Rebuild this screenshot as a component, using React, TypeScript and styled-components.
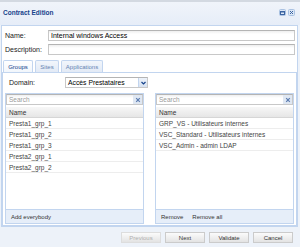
import React, { FC } from 'react'
import styled, { createGlobalStyle } from 'styled-components'

const GlobalStyle = createGlobalStyle`
  html, body { margin: 0; padding: 0; }
  body {
    width: 300px;
    height: 247px;
    overflow: hidden;
    background: #edf2f9;
    font-family: 'Liberation Sans', Arial, sans-serif;
  }
  * { box-sizing: border-box; }
`

const Window = styled.div`
  width: 300px;
  height: 247px;
  display: flex;
  flex-direction: column;
  background: #edf2f9;
  border-top: 2px solid #d3d9e1;
`

const TitleBar = styled.div`
  height: 23px;
  display: flex;
  align-items: center;
  justify-content: space-between;
  padding: 0 5px 2px 3px;
  background: linear-gradient(#f0f4fa, #e6edf8);
`

const Title = styled.div`
  font: bold 6.5px 'Liberation Sans', Arial, sans-serif;
  color: #15428b;
`

const Tools = styled.div`
  display: flex;
  gap: 2px;
`

const Tool = styled.div`
  width: 7px;
  height: 7px;
  display: flex;
  align-items: center;
  justify-content: center;
  background: #dce7f5;
  border: 1px solid #aac2e2;
  border-radius: 1.5px;
`

const Body = styled.div`
  margin-left: 1px;
  width: 297px;
  height: 202px;
  display: flex;
  flex-direction: column;
  border: 1px solid #c2d5ef;
  background: linear-gradient(#ffffff 40%, #e4edf9 46px);
`

const Form = styled.div`
  padding: 4px 2px 0 3px;
  display: flex;
  flex-direction: column;
  gap: 3px;
`

const Row = styled.div`
  display: flex;
  align-items: center;
`

const Label = styled.div<{ $w: number }>`
  width: ${(p) => p.$w}px;
  font-size: 7px;
  color: #1a1a1a;
`

const TextInput = styled.div`
  flex: 1;
  height: 11px;
  padding-left: 2px;
  display: flex;
  align-items: center;
  font-size: 7px;
  color: #000;
  background: linear-gradient(#eeeeee, #ffffff 3px);
  border: 1px solid #c8c8c8;
  border-top-color: #b4b4b4;
`

const TabStrip = styled.div`
  margin-top: 5px;
  height: 12px;
  padding-left: 1px;
  display: flex;
  align-items: flex-end;
  gap: 2px;
`

const Tab = styled.div<{ $w: number; $active?: boolean }>`
  width: ${(p) => p.$w}px;
  height: 12px;
  display: flex;
  align-items: center;
  justify-content: center;
  font-size: 6px;
  color: ${(p) => (p.$active ? '#15428b' : '#6684b3')};
  background: ${(p) =>
    p.$active ? 'linear-gradient(#ffffff, #f1f6fc)' : 'linear-gradient(#f2f6fb, #e2eaf6)'};
  border: 1px solid #c2d5ef;
  border-bottom: none;
  border-radius: 2px 2px 0 0;
`

const TabPanel = styled.div`
  flex: 1;
  display: flex;
  flex-direction: column;
  padding: 4px 2px 1px 2px;
  background: #ffffff;
  border: 1px solid #c2d5ef;
`

const DomainRow = styled.div`
  height: 11px;
  padding-left: 4px;
  display: flex;
  align-items: center;
`

const Select = styled.div`
  width: 83px;
  height: 11px;
  display: flex;
  align-items: stretch;
  background: #fff;
  border: 1px solid #c8c8c8;
  border-top-color: #b4b4b4;
`

const SelectText = styled.div`
  flex: 1;
  padding-left: 2px;
  display: flex;
  align-items: center;
  font-size: 6.8px;
  color: #000;
`

const SelectArrow = styled.div`
  width: 9px;
  display: flex;
  align-items: center;
  justify-content: center;
  background: linear-gradient(#eef3fa, #d7e2f1);
  border-left: 1px solid #c2d5ef;
`

const Lists = styled.div`
  margin-top: 5px;
  display: flex;
  gap: 11px;
`

const ListPanel = styled.div`
  width: 139px;
  height: 131px;
  display: flex;
  flex-direction: column;
  border: 1px solid #c2d5ef;
  background: #fff;
`

const SearchBox = styled.div`
  margin-bottom: 2px;
  height: 11px;
  display: flex;
  align-items: center;
  padding-left: 2px;
  font-size: 6.5px;
  color: #9a9a9a;
  border: 1px solid #c8c8c8;
  border-top-color: #b4b4b4;
  background: linear-gradient(#efefef, #ffffff 3px);
`

const SearchText = styled.div`
  flex: 1;
`

const ClearButton = styled.div`
  width: 9px;
  height: 9px;
  display: flex;
  align-items: center;
  justify-content: center;
  background: #dfe7f2;
`

const Header = styled.div`
  height: 11px;
  padding-left: 3px;
  display: flex;
  align-items: center;
  font-size: 6.5px;
  color: #333;
  background: linear-gradient(#f7f7f7, #e6e6e6);
  border-bottom: 1px solid #d6d6d6;
`

const Item = styled.div`
  height: 11px;
  padding-left: 3px;
  display: flex;
  align-items: center;
  font-size: 6.5px;
  color: #444;
  border-bottom: 1px solid #ededed;
`

const Spacer = styled.div`
  flex: 1;
`

const ListFooter = styled.div`
  height: 14px;
  padding-left: 5px;
  display: flex;
  align-items: center;
  gap: 9px;
  font-size: 6px;
  color: #333;
  background: #e6eef9;
  border-top: 1px solid #c2d5ef;
`

const ButtonBar = styled.div`
  flex: 1;
  padding: 5px 7px 0 0;
  display: flex;
  justify-content: flex-end;
  align-items: flex-start;
  gap: 4px;
`

const Button = styled.div<{ $disabled?: boolean }>`
  width: 40px;
  height: 11px;
  display: flex;
  align-items: center;
  justify-content: center;
  font-size: 6px;
  color: ${(p) => (p.$disabled ? '#b0b0b0' : '#333')};
  background: linear-gradient(#fbfbfb, #e3e3e3);
  border: 1px solid ${(p) => (p.$disabled ? '#dddddd' : '#cbcbcb')};
`

const left = ['Presta1_grp_1', 'Presta1_grp_2', 'Presta1_grp_3', 'Presta2_grp_1', 'Presta2_grp_2']
const right = ['GRP_VS - Utilisateurs internes', 'VSC_Standard - Utilisateurs internes', 'VSC_Admin - admin LDAP']

const Cross: FC<{ size: number; color: string }> = ({ size, color }) => (
  <svg width={size} height={size} viewBox='0 0 10 10'>
    <path d='M2 2 L8 8 M8 2 L2 8' stroke={color} strokeWidth='2' />
  </svg>
)

const List: FC<{ items: string[]; footer: string[] }> = ({ items, footer }) => (
  <ListPanel>
    <SearchBox>
      <SearchText>Search</SearchText>
      <ClearButton><Cross size={6} color='#5a7bb0' /></ClearButton>
    </SearchBox>
    <Header>Name</Header>
    {items.map((i) => <Item key={i}>{i}</Item>)}
    <Spacer />
    <ListFooter>{footer.map((f) => <span key={f}>{f}</span>)}</ListFooter>
  </ListPanel>
)

const App: FC = () => (
  <>
    <GlobalStyle />
    <Window>
      <TitleBar>
        <Title>Contract Edition</Title>
        <Tools>
          <Tool>
            <svg width='5' height='4' viewBox='0 0 5 4'>
              <rect x='0.5' y='0.5' width='4' height='3' fill='none' stroke='#3b64a2' />
              <rect x='0' y='0' width='5' height='1.5' fill='#3b64a2' />
            </svg>
          </Tool>
          <Tool><Cross size={5} color='#3b64a2' /></Tool>
        </Tools>
      </TitleBar>
      <Body>
        <Form>
          <Row>
            <Label $w={43}>Name:</Label>
            <TextInput>Internal windows Access</TextInput>
          </Row>
          <Row>
            <Label $w={43}>Description:</Label>
            <TextInput />
          </Row>
        </Form>
        <TabStrip>
          <Tab $w={30} $active>Groups</Tab>
          <Tab $w={24}>Sites</Tab>
          <Tab $w={42}>Applications</Tab>
        </TabStrip>
        <TabPanel>
          <DomainRow>
            <Label $w={56}>Domain:</Label>
            <Select>
              <SelectText>Accès Prestataires</SelectText>
              <SelectArrow>
                <svg width='5' height='4' viewBox='0 0 5 4'>
                  <path d='M0.5 1 L2.5 3 L4.5 1' fill='none' stroke='#15428b' strokeWidth='1.2' />
                </svg>
              </SelectArrow>
            </Select>
          </DomainRow>
          <Lists>
            <List items={left} footer={['Add everybody']} />
            <List items={right} footer={['Remove', 'Remove all']} />
          </Lists>
        </TabPanel>
      </Body>
      <ButtonBar>
        <Button $disabled>Previous</Button>
        <Button>Next</Button>
        <Button>Validate</Button>
        <Button>Cancel</Button>
      </ButtonBar>
    </Window>
  </>
)

export default App
